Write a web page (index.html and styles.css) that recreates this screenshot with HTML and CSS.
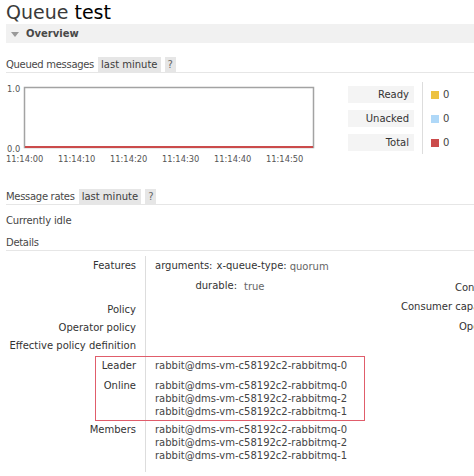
FILE: index.html
```html
<!DOCTYPE html>
<html>
<head>
<meta charset="utf-8">
<link rel="stylesheet" href="styles.css">
</head>
<body>
<h1 class="title">Queue <span class="name">test</span></h1>
<div class="section"><span class="tri"></span>Overview</div>

<div class="hdr"><span class="ht">Queued messages</span><span class="pill">last minute</span><span class="pill q">?</span></div>
<div class="chartrow">
  <svg class="chart" width="316" height="100" viewBox="6 74 316 100">
    <rect x="24.5" y="88.5" width="289" height="60" fill="#fff" stroke="#a3a3a3" stroke-width="1.5"/>
    <line x1="25" y1="148" x2="313" y2="148" stroke="#cb4b4b" stroke-width="2"/>
    <g class="tick">
      <text x="7" y="93">1.0</text>
      <text x="7" y="152.5">0.0</text>
      <text x="6" y="162.5">11:14:00</text>
      <text x="58" y="162.5">11:14:10</text>
      <text x="110" y="162.5">11:14:20</text>
      <text x="162" y="162.5">11:14:30</text>
      <text x="214" y="162.5">11:14:40</text>
      <text x="266" y="162.5">11:14:50</text>
    </g>
  </svg>
  <div class="legend">
    <div class="lbls">
      <div class="lbl">Ready</div>
      <div class="lbl">Unacked</div>
      <div class="lbl">Total</div>
    </div>
    <div class="vals">
      <div class="val"><span class="sq ready"></span>0</div>
      <div class="val"><span class="sq unacked"></span>0</div>
      <div class="val"><span class="sq total"></span>0</div>
    </div>
  </div>
</div>

<div class="hdr rates"><span class="ht">Message rates</span><span class="pill">last minute</span><span class="pill q">?</span></div>
<p class="idle">Currently idle</p>
<div class="hdr details"><span class="ht">Details</span></div>

<div class="detailrow">
  <div class="facts">
    <div class="th feat">Features</div>
    <div class="td feat">
      <div class="fl"><span class="k">arguments:</span><span class="k sub">x-queue-type:</span><span class="v">quorum</span></div>
      <div class="fl"><span class="k kw">durable:</span><span class="v">true</span></div>
    </div>
    <div class="th">Policy</div><div class="td"></div>
    <div class="th">Operator policy</div><div class="td"></div>
    <div class="th">Effective policy definition</div><div class="td"></div>
    <div class="th lead">Leader</div><div class="td lead">rabbit@dms-vm-c58192c2-rabbitmq-0</div>
    <div class="th list">Online</div>
    <div class="td list">rabbit@dms-vm-c58192c2-rabbitmq-0<br>rabbit@dms-vm-c58192c2-rabbitmq-2<br>rabbit@dms-vm-c58192c2-rabbitmq-1</div>
    <div class="th list mem">Members</div>
    <div class="td list mem last">rabbit@dms-vm-c58192c2-rabbitmq-0<br>rabbit@dms-vm-c58192c2-rabbitmq-2<br>rabbit@dms-vm-c58192c2-rabbitmq-1</div>
  </div>
  <div class="facts2">
    <div class="r r1">Consumers</div>
    <div class="r r2">Consumer capacity</div>
    <div class="r r3">Open files</div>
  </div>
</div>
<div class="highlight"></div>
</body>
</html>
```
FILE: styles.css
```css
html, body {
  margin: 0;
  padding: 0;
}
body {
  position: relative;
  width: 474px;
  height: 476px;
  overflow: hidden;
  background: #fff;
  font-family: "DejaVu Sans", Verdana, sans-serif;
  font-size: 10px;
  color: #444;
  padding: 0 0 0 6px;
  box-sizing: border-box;
}
.title {
  margin: 0;
  padding-top: 1px;
  font-size: 19px;
  line-height: 23px;
  font-weight: normal;
  color: #3a3a3a;
  white-space: nowrap;
}
.title .name { color: #000; }
.section {
  height: 19px;
  line-height: 19px;
  background: #f1f1f1;
  font-weight: bold;
  color: #484848;
  display: flex;
  align-items: center;
  padding-left: 5px;
}
.tri {
  width: 0;
  height: 0;
  border-left: 4px solid transparent;
  border-right: 4px solid transparent;
  border-top: 5px solid #999;
  margin-right: 7px;
  margin-top: 1px;
}
.hdr {
  margin-top: 14px;
  height: 15px;
  line-height: 15px;
  display: flex;
  border-bottom: 1px solid #e6e6e6;
  color: #484848;
  white-space: nowrap;
}
.ht { letter-spacing: -0.3px; }
.pill {
  background: #e6e6e6;
  padding: 0 3px;
  margin-left: 4px;
  color: #3c3c3c;
}
.pill.q { color: #666; padding: 0 3px; }
.chartrow {
  display: flex;
  height: 100px;
}
.chart { display: block; flex-shrink: 0; }
.tick text {
  font-family: "DejaVu Sans", Verdana, sans-serif;
  font-size: 8.3px;
  fill: #545454;
}
.legend {
  display: flex;
  margin-left: 26px;
  padding-top: 9px;
}
.lbls {
  display: flex;
  flex-direction: column;
  gap: 7px;
  padding: 4px 0;
}
.lbl {
  width: 66px;
  height: 17px;
  line-height: 17px;
  background: #f4f4f4;
  text-align: right;
  padding-right: 5px;
  box-sizing: border-box;
  color: #333;
}
.vals {
  margin-left: 8px;
  border-left: 1px solid #ddd;
  padding: 4px 0 3px 8px;
  display: flex;
  flex-direction: column;
  gap: 7px;
  height: 65px;
}
.val {
  height: 17px;
  line-height: 17px;
  display: flex;
  align-items: center;
  color: #444;
}
.sq {
  width: 8px;
  height: 8px;
  margin-right: 4px;
}
.sq.ready { background: #edc240; }
.sq.unacked { background: #afd8f8; }
.sq.total { background: #cb4b4b; }
.hdr.rates { margin-top: 16px; }
.idle {
  margin: 8px 0 0;
  line-height: 15px;
  letter-spacing: -0.15px;
  color: #444;
}
.hdr.details { margin-top: 7px; }
.detailrow {
  display: flex;
  white-space: nowrap;
}
.facts {
  display: grid;
  grid-template-columns: 139px 246px;
  flex-shrink: 0;
  margin-top: 5px;
}
.th {
  text-align: right;
  padding-right: 9px;
  line-height: 18px;
  color: #333;
}
.td {
  border-left: 1px solid #ddd;
  padding-left: 9px;
  line-height: 18px;
  color: #444;
}
.th.feat, .td.feat {
  line-height: 19px;
  padding-bottom: 5px;
}
.fl { display: flex; }
.k { color: #333; }
.k.sub { margin-left: 4px; margin-right: 3px; }
.k.kw {
  width: 82px;
  text-align: right;
  margin-right: 7px;
}
.v { color: #666; padding-top: 1px; }
.th.lead, .td.lead { padding-top: 2px; }
.th.list, .td.list {
  line-height: 13px;
  padding-top: 4px;
}
.th.mem, .td.mem { padding-top: 5px; }
.td.last { padding-bottom: 10px; }
.facts2 {
  margin-top: 27px;
  margin-left: 4px;
  display: flex;
  flex-direction: column;
  color: #333;
}
.r { line-height: 19px; }
.r1 { margin-left: 60px; }
.r2 { margin-left: 6px; }
.r3 { margin-left: 64px; line-height: 21px; }
.highlight {
  position: absolute;
  left: 95px;
  top: 356px;
  width: 270px;
  height: 65px;
  border: 1.5px solid #e05d6b;
  box-sizing: border-box;
}
```
